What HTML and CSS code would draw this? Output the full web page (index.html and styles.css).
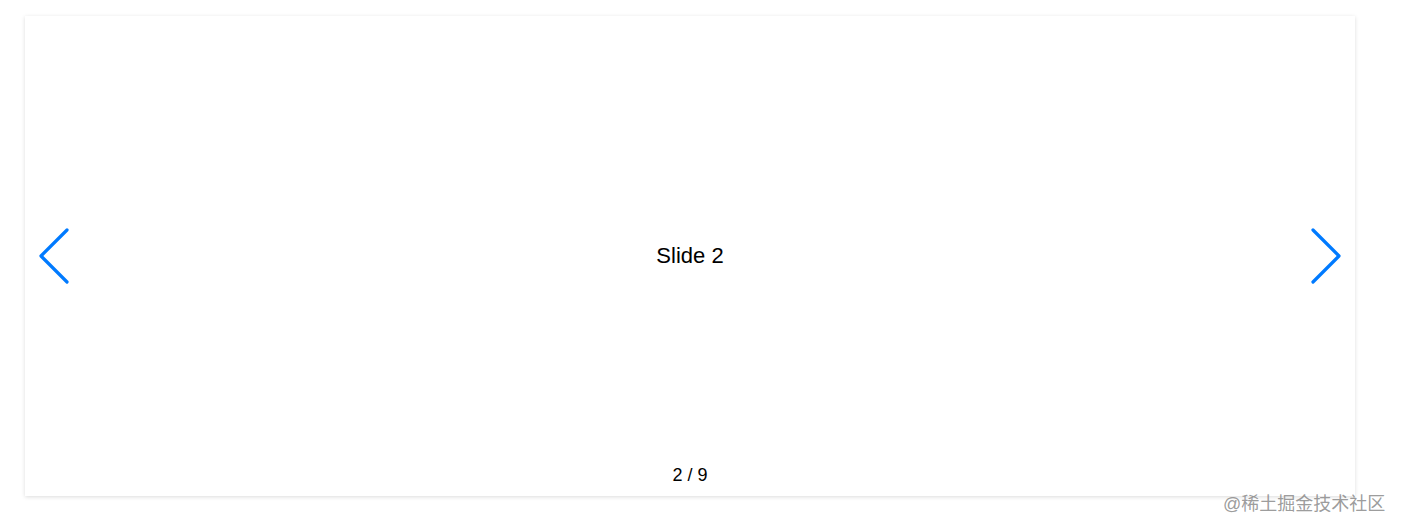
FILE: index.html
```html
<!DOCTYPE html>
<html lang="en">
<head>
<meta charset="utf-8">
<title>Swiper</title>
<link rel="stylesheet" href="styles.css">
</head>
<body>
<div class="page">
  <div class="swiper">
    <button class="nav nav-prev" aria-label="Previous slide">
      <svg viewBox="0 0 30 56" width="30" height="56"><path d="M28 2 L2 28 L28 54" fill="none" stroke="#007aff" stroke-width="3.2" stroke-linecap="round" stroke-linejoin="round"/></svg>
    </button>
    <div class="slide">Slide 2</div>
    <button class="nav nav-next" aria-label="Next slide">
      <svg viewBox="0 0 30 56" width="30" height="56"><path d="M2 2 L28 28 L2 54" fill="none" stroke="#007aff" stroke-width="3.2" stroke-linecap="round" stroke-linejoin="round"/></svg>
    </button>
    <div class="pagination">2 / 9</div>
  </div>
</div>
<div class="watermark">@稀土掘金技术社区</div>
</body>
</html>
```
FILE: styles.css
```css
html, body {
  margin: 0;
  padding: 0;
  background: #fff;
  font-family: "Liberation Sans", Arial, sans-serif;
}
.page {
  padding: 16px 46px 32px 25px;
}
.swiper {
  position: relative;
  height: 480px;
  background: #fff;
  box-shadow: 0 1px 4px rgba(0,0,0,0.14);
  display: flex;
  align-items: center;
  justify-content: center;
}
.slide {
  font-size: 22px;
  color: #000;
  margin-top: -1px;
}
.nav {
  position: absolute;
  top: 212px;
  width: 30px;
  height: 56px;
  padding: 0;
  border: 0;
  background: none;
  display: flex;
}
.nav-prev { left: 14px; }
.nav-next { right: 14px; }
.pagination {
  position: absolute;
  left: 0;
  right: 0;
  bottom: 10px;
  text-align: center;
  font-size: 18px;
  color: #000;
}
.watermark {
  position: absolute;
  left: 1223px;
  top: 489px;
  font-family: "Liberation Sans", "Noto Sans CJK SC", sans-serif;
  font-size: 18px;
  color: rgba(130,130,130,0.8);
}
```
